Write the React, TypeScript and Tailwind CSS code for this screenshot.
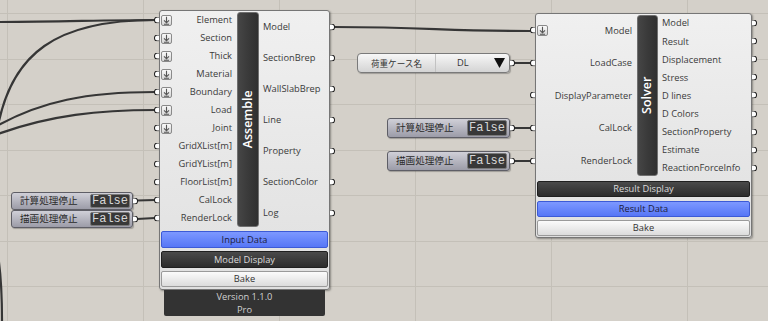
import React from "react";

function FlattenIcon() {
  return (
    <span className="flex h-[11px] w-[11px] shrink-0 items-center justify-center rounded-[2px] border border-[#8a8a8a] bg-gradient-to-b from-[#fafafa] to-[#d6d6d6]">
      <svg width="9" height="9" viewBox="0 0 9 9" fill="none" stroke="#555" strokeWidth="1.1">
        <path d="M4.5 0.8v6M2 4.3l2.5 2.5L7 4.3M2 8.2h5" />
      </svg>
    </span>
  );
}

function InGrip() {
  return (
    <span className="absolute left-[-6px] top-1/2 h-[7px] w-[5px] -translate-y-1/2 rounded-l-full border-[1.5px] border-r-0 border-[#1a1a1a] bg-white" />
  );
}

function OutGrip() {
  return (
    <span className="absolute right-[-6px] top-1/2 h-[7px] w-[5px] -translate-y-1/2 rounded-r-full border-[1.5px] border-l-0 border-[#1a1a1a] bg-white" />
  );
}

function InRow({ label, icon, className }: { label: string; icon?: boolean; className: string }) {
  return (
    <div className={`relative flex items-center ${className}`}>
      <InGrip />
      <span className="ml-px w-[11px] shrink-0">{icon ? <FlattenIcon /> : null}</span>
      <span className="flex-1 whitespace-nowrap pr-[5px] text-right text-[9.3px] leading-none text-[#3a3a3a]">{label}</span>
    </div>
  );
}

function OutRow({ label, className }: { label: string; className: string }) {
  return (
    <div className={`relative flex items-center ${className}`}>
      <span className="whitespace-nowrap pl-[4px] text-[9.3px] leading-none text-[#3a3a3a]">{label}</span>
      <OutGrip />
    </div>
  );
}

function NameBar({ name, className }: { name: string; className: string }) {
  return (
    <div className={`flex flex-col ${className}`}>
      <div className="my-px flex flex-1 items-center justify-center rounded-[3px] border border-[#707070] bg-gradient-to-r from-[#464646] via-[#3a3a3a] to-[#303030]">
        <span className="-rotate-90 whitespace-nowrap text-[12.5px] font-semibold leading-none text-white">{name}</span>
      </div>
    </div>
  );
}

function Btn({ kind, label, className }: { kind: "blue" | "dark" | "light"; label: string; className: string }) {
  const styles =
    kind === "blue"
      ? "border-[#3c5ad6] bg-gradient-to-b from-[#7d98ff] to-[#5676f6] text-[#1c1c3a]"
      : kind === "dark"
      ? "border-[#1f1f1f] bg-gradient-to-b from-[#4a4a4a] to-[#2c2c2c] text-[#dcdcdc]"
      : "border-[#9a9a9a] bg-gradient-to-b from-[#fbfbfb] to-[#dcdcdc] text-[#333]";
  return (
    <div className={`flex items-center justify-center rounded-[2px] border text-[9.3px] leading-none ${styles} ${className}`}>
      {label}
    </div>
  );
}

function Toggle({ className, label }: { className: string; label: string }) {
  return (
    <div
      className={`absolute flex rounded-[3px] border border-[#5e5e66] bg-gradient-to-b from-[#d0d0d8] to-[#9c9ca8] shadow-[1px_1px_1px_rgba(0,0,0,0.25)] ${className}`}
    >
      <span className="flex flex-1 items-center pl-[8px] font-['Noto_Sans_CJK_JP',sans-serif] text-[9.6px] leading-none text-[#2a2a2a]">
        {label}
      </span>
      <span className="my-[1px] mr-[2px] flex w-[40px] items-center justify-center rounded-[2px] border border-[#7a7a7a] bg-[#383838] font-['Liberation_Mono',monospace] text-[12px] leading-none text-[#d6d6d6]">
        False
      </span>
      <OutGrip />
    </div>
  );
}

function Wires() {
  const vx = [7, 143, 279, 415, 551, 687];
  const hy = [13, 59, 104, 150, 195, 241, 286];
  const wire = "#363636";
  return (
    <svg className="absolute inset-0" width="768" height="321" viewBox="0 0 768 321">
      {vx.map((x) => (
        <line key={"v" + x} x1={x + 0.5} y1="0" x2={x + 0.5} y2="321" stroke="#c4c0b8" strokeWidth="1" />
      ))}
      {hy.map((y) => (
        <line key={"h" + y} x1="0" y1={y + 0.5} x2="768" y2={y + 0.5} stroke="#c4c0b8" strokeWidth="1" />
      ))}
      <g fill="none" stroke={wire} strokeWidth="2.2" strokeLinecap="round">
        <path d="M -5 22 C 60 22 100 20 155 20" />
        <path d="M -4 138 C 8 50 60 20 155 20" />
        <path d="M -10 130 C 40 100 90 92 155 92" />
        <path d="M -2 134 C 50 115 100 110 155 110" />
        <path d="M 2 322 C 2 295 1 270 -3 250" />
        <path d="M 137 200.5 L 155 200" />
        <path d="M 137 219 L 155 218" />
        <path d="M 334 27 C 430 27 440 31 530 31" />
        <path d="M 514 63 L 530 63" />
        <path d="M 514 128 L 530 128" />
        <path d="M 514 161 L 530 161" />
      </g>
    </svg>
  );
}

function Assemble() {
  const inputs = [
    ["Element", true],
    ["Section", true],
    ["Thick", true],
    ["Material", true],
    ["Boundary", true],
    ["Load", true],
    ["Joint", true],
    ["GridXList[m]", false],
    ["GridYList[m]", false],
    ["FloorList[m]", false],
    ["CalLock", false],
    ["RenderLock", false],
  ] as const;
  const outputs = ["Model", "SectionBrep", "WallSlabBrep", "Line", "Property", "SectionColor", "Log"];
  return (
    <div className="absolute left-[159px] top-[10px] flex w-[171px] flex-col">
      <div className="rounded-[3px] border border-[#767676] bg-gradient-to-b from-[#f0f0f0] to-[#e0e0e0] pb-[2px] shadow-[1px_1px_2px_rgba(0,0,0,0.35)]">
        <div className="flex h-[217px]">
          <div className="flex w-[77px] flex-col">
            {inputs.map(([l, i]) => (
              <InRow key={l} label={l} icon={i} className="h-[18px]" />
            ))}
          </div>
          <NameBar name="Assemble" className="w-[22px]" />
          <div className="flex flex-1 flex-col">
            {outputs.map((o) => (
              <OutRow key={o} label={o} className="flex-1" />
            ))}
          </div>
        </div>
        <div className="mx-px flex flex-col">
          <Btn kind="blue" label="Input Data" className="mt-[3px] h-[17px]" />
          <Btn kind="dark" label="Model Display" className="mt-[3px] h-[17px]" />
          <Btn kind="light" label="Bake" className="mt-[3px] h-[16px]" />
        </div>
      </div>
      <div className="mx-[5px] flex h-[26px] flex-col items-center justify-center rounded-b-[2px] bg-[#333] text-[9.3px] leading-[13px] text-[#d0d0d0]">
        <span>Version 1.1.0</span>
        <span>Pro</span>
      </div>
    </div>
  );
}

function Solver() {
  const inputs = [
    ["Model", true],
    ["LoadCase", false],
    ["DisplayParameter", false],
    ["CalLock", false],
    ["RenderLock", false],
  ] as const;
  const outputs = [
    "Model",
    "Result",
    "Displacement",
    "Stress",
    "D lines",
    "D Colors",
    "SectionProperty",
    "Estimate",
    "ReactionForceInfo",
  ];
  return (
    <div className="absolute left-[535px] top-[13px] w-[217px] rounded-[3px] border border-[#767676] bg-gradient-to-b from-[#f0f0f0] to-[#e0e0e0] pb-[1px] shadow-[1px_1px_2px_rgba(0,0,0,0.35)]">
      <div className="flex h-[163px]">
        <div className="flex w-[101px] flex-col">
          {inputs.map(([l, i]) => (
            <InRow key={l} label={l} icon={i} className="flex-1" />
          ))}
        </div>
        <NameBar name="Solver" className="w-[21px]" />
        <div className="flex flex-1 flex-col">
          {outputs.map((o) => (
            <OutRow key={o} label={o} className="flex-1" />
          ))}
        </div>
      </div>
      <div className="mx-px flex flex-col">
        <Btn kind="dark" label="Result Display" className="mt-[4px] h-[16px]" />
        <Btn kind="blue" label="Result Data" className="mt-[4px] h-[16px]" />
        <Btn kind="light" label="Bake" className="mt-[3px] h-[16px]" />
      </div>
    </div>
  );
}

function Dropdown() {
  return (
    <div className="absolute left-[357px] top-[53px] flex h-[20px] w-[153px] rounded-[4px] border border-[#7a7a7a] bg-gradient-to-b from-[#f7f7f7] to-[#d4d4d4] shadow-[1px_1px_1px_rgba(0,0,0,0.25)]">
      <span className="flex w-[78px] items-center justify-center border-r border-[#c2c2c2] font-['Noto_Sans_CJK_JP',sans-serif] text-[8.6px] leading-none text-[#333]">
        荷重ケース名
      </span>
      <span className="relative flex flex-1 items-center pl-[21px] text-[9.3px] leading-none text-[#333]">
        DL
        <svg className="absolute right-[4px] top-[4px]" width="11" height="10" viewBox="0 0 11 10">
          <path d="M0 0 H11 L5.5 10 Z" fill="#111" />
        </svg>
      </span>
      <OutGrip />
    </div>
  );
}

export default function App() {
  return (
    <div className="relative h-[321px] w-[768px] overflow-hidden bg-[#d4d0c9] font-['Open_Sans','Noto_Sans_CJK_JP',sans-serif]">
      <Wires />
      <Assemble />
      <Solver />
      <Dropdown />
      <Toggle className="left-[11px] top-[192px] h-[18px] w-[122px]" label="計算処理停止" />
      <Toggle className="left-[11px] top-[210px] h-[18px] w-[122px]" label="描画処理停止" />
      <Toggle className="left-[387px] top-[118px] h-[20px] w-[123px]" label="計算処理停止" />
      <Toggle className="left-[387px] top-[151px] h-[20px] w-[123px]" label="描画処理停止" />
    </div>
  );
}
